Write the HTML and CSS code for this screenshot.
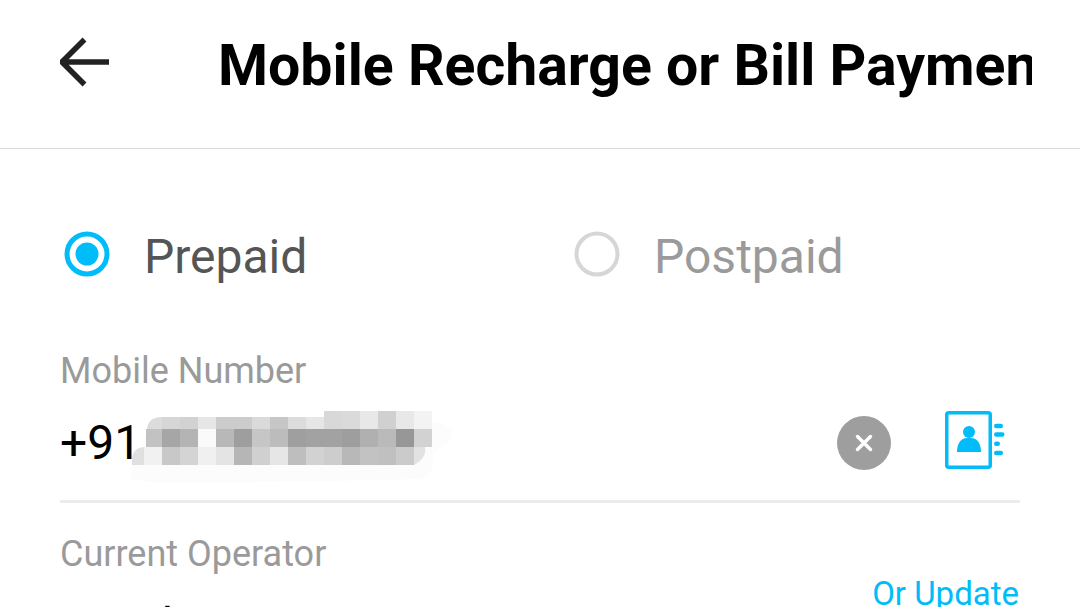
FILE: index.html
```html
<!DOCTYPE html>
<html lang="en">
<head>
<meta charset="utf-8">
<title>Mobile Recharge or Bill Payment</title>
<link rel="stylesheet" href="styles.css">
</head>
<body>
<header class="topbar">
  <button class="back" aria-label="Back">
    <svg class="back-icon" viewBox="0 0 60 60" width="60" height="60"><path d="M60 23H13M35.500 0.500L13 23L35.500 45.500" transform="translate(-11 8)" fill="none" stroke="#222" stroke-width="5.500"/></svg>
  </button>
  <h1 class="title">Mobile Recharge or Bill Payment</h1>
</header>
<main class="form">
  <div class="plan">
    <label class="option">
      <svg class="radio" viewBox="0 0 46 46" width="46" height="46"><circle cx="23" cy="23" r="20" fill="none" stroke="#00bcf8" stroke-width="5"/><circle cx="23" cy="23" r="11.500" fill="#00bcf8"/></svg>
      <span class="option-text on">Prepaid</span>
    </label>
    <label class="option">
      <svg class="radio" viewBox="0 0 46 46" width="46" height="46"><circle cx="23" cy="23" r="20.500" fill="none" stroke="#d6d6d6" stroke-width="4"/></svg>
      <span class="option-text">Postpaid</span>
    </label>
  </div>
  <div class="field">
    <div class="label label-number">Mobile Number</div>
    <div class="number-row">
      <span class="number">+91</span>
      <svg class="mosaic" viewBox="0 0 330 80" width="330" height="80" aria-hidden="true">
        <path d="M3 74Q1 56 14 55L16 37Q16 24 32 24H195V18H312L325 24L322 36L305 48Q308 70 290 74L200 76L30 78Z" fill="#fcfcfc"/>
        <g transform="translate(-128 -405)">
          <path d="M147 429Q148 417 162 417V429Z" fill="#dcdcdc"/>
          <rect x="162" y="417" width="18" height="12" fill="#d6d6d6"/><rect x="180" y="417" width="18" height="12" fill="#d2d2d2"/><rect x="198" y="417" width="18" height="12" fill="#e6e6e6"/><rect x="216" y="417" width="18" height="12" fill="#cccccc"/><rect x="234" y="417" width="18" height="12" fill="#cccccc"/><rect x="252" y="417" width="18" height="12" fill="#dadada"/><rect x="270" y="417" width="18" height="12" fill="#c6c6c6"/><rect x="288" y="417" width="18" height="12" fill="#dcdcdc"/><rect x="306" y="417" width="18" height="12" fill="#e6e6e6"/>
          <rect x="324" y="411" width="18" height="18" fill="#d8d8d8"/><rect x="342" y="411" width="18" height="18" fill="#dadada"/><rect x="360" y="411" width="18" height="18" fill="#e8e8e8"/><rect x="378" y="411" width="18" height="18" fill="#d0d0d0"/><rect x="396" y="411" width="18" height="18" fill="#e8e8e8"/><rect x="414" y="411" width="18" height="18" fill="#f3f3f3"/>
          <rect x="146" y="429" width="16" height="18" fill="#c2c2c2"/><rect x="162" y="429" width="18" height="18" fill="#a6a6a6"/><rect x="180" y="429" width="18" height="18" fill="#b4b4b4"/><rect x="198" y="429" width="18" height="18" fill="#fafafa"/><rect x="216" y="429" width="18" height="18" fill="#b8b8b8"/><rect x="234" y="429" width="18" height="18" fill="#9e9e9e"/><rect x="252" y="429" width="18" height="18" fill="#c6c6c6"/><rect x="270" y="429" width="18" height="18" fill="#bcbcbc"/><rect x="288" y="429" width="18" height="18" fill="#9f9f9f"/><rect x="306" y="429" width="18" height="18" fill="#a2a2a2"/><rect x="324" y="429" width="18" height="18" fill="#a2a2a2"/><rect x="342" y="429" width="18" height="18" fill="#9e9e9e"/><rect x="360" y="429" width="18" height="18" fill="#b0b0b0"/><rect x="378" y="429" width="18" height="18" fill="#bababa"/><rect x="396" y="429" width="18" height="18" fill="#979797"/><rect x="414" y="429" width="18" height="18" fill="#d2d2d2"/>
          <path d="M132 465Q130 448 144 447V465Z" fill="#e0e0e0"/>
          <rect x="144" y="447" width="18" height="18" fill="#f1f1f1"/><rect x="162" y="447" width="18" height="18" fill="#c8c8c8"/><rect x="180" y="447" width="18" height="18" fill="#d4d4d4"/><rect x="198" y="447" width="18" height="18" fill="#f0f0f0"/><rect x="216" y="447" width="18" height="18" fill="#e4e4e4"/><rect x="234" y="447" width="18" height="18" fill="#b6b6b6"/><rect x="252" y="447" width="18" height="18" fill="#d0d0d0"/><rect x="270" y="447" width="18" height="18" fill="#e6e6e6"/><rect x="288" y="447" width="18" height="18" fill="#bebebe"/><rect x="306" y="447" width="18" height="18" fill="#d2d2d2"/><rect x="324" y="447" width="18" height="18" fill="#cdcdcd"/><rect x="342" y="447" width="18" height="18" fill="#b8b8b8"/><rect x="360" y="447" width="18" height="18" fill="#c2c2c2"/><rect x="378" y="447" width="18" height="18" fill="#c0c0c0"/><rect x="396" y="447" width="18" height="18" fill="#cbcbcb"/>
          <path d="M414 447H425Q427 458 414 465Z" fill="#e2e2e2"/>
        </g>
      </svg>
      <svg class="clear" viewBox="0 0 54 54" width="54" height="54"><circle cx="27" cy="27" r="27" fill="#9e9e9e"/><path d="M20.500 20.500L33.500 33.500M33.500 20.500L20.500 33.500" stroke="#fff" stroke-width="3.500" stroke-linecap="round"/></svg>
      <svg class="contacts" viewBox="0 0 60 58" width="60" height="58"><rect x="1.750" y="1.750" width="43.500" height="54.500" rx="2" fill="none" stroke="#00bcf8" stroke-width="3.500"/><circle cx="24" cy="21" r="6" fill="#00bcf8"/><path d="M12 41C12 31 17 27 22 27H26C31 27 36 31 36 41Z" fill="#00bcf8"/><rect x="49" y="12.800" width="9" height="4.500" rx="2.200" fill="#00bcf8"/><rect x="49" y="21.300" width="10.500" height="4.500" rx="2.200" fill="#00bcf8"/><rect x="49" y="30.500" width="6" height="4.500" rx="2.200" fill="#00bcf8"/><rect x="49" y="39.800" width="9" height="4.500" rx="2.200" fill="#00bcf8"/></svg>
    </div>
  </div>
  <div class="operator">
    <div class="operator-main">
      <div class="label">Current Operator</div>
      <div class="operator-name">Airtel</div>
    </div>
    <a class="update">Or Update</a>
  </div>
</main>
</body>
</html>
```
FILE: styles.css
```css
html, body {
  margin: 0;
  height: 607px;
  overflow: hidden;
  background: #fff;
  font-family: Roboto, "Noto Sans", sans-serif;
}
.topbar {
  display: flex;
  align-items: center;
  height: 148px;
  padding: 0 48px 0 60px;
  border-bottom: 1px solid #dcdcdc;
  width: 972px;
}
.back {
  flex: none;
  width: 60px;
  height: 60px;
  padding: 0;
  border: 0;
  background: none;
  margin-top: -26px;
}
.back-icon { display: block; }
.title {
  margin: -16px 0 0 98px;
  font-size: 57.2px;
  font-weight: 700;
  line-height: 66px;
  color: #000;
  white-space: nowrap;
  overflow: hidden;
  min-width: 0;
}
.form {
  padding: 82px 60px 0;
}
.plan {
  display: flex;
  height: 46px;
  padding-left: 4px;
}
.option {
  flex: none;
  display: flex;
  align-items: center;
  gap: 34px;
  width: 510px;
}
.radio { flex: none; }
.option-text {
  font-size: 48px;
  line-height: 52px;
  margin-top: 6px;
  color: #9a9a9a;
}
.option-text.on { color: #555; }
.field {
  margin-top: 72px;
  border-bottom: 3px solid #ebebeb;
  height: 151px;
}
.label {
  font-size: 36px;
  line-height: 44px;
  color: #9a9a9a;
}
.label-number {
  margin-bottom: 10px;
}
.number-row {
  position: relative;
  display: flex;
  align-items: center;
  height: 80px;
}
.number {
  font-size: 48px;
  line-height: 52px;
  color: #000;
  position: relative;
  z-index: 1;
}
.mosaic {
  position: absolute;
  left: 68px;
  top: 2px;
}
.clear {
  flex: none;
  margin-left: auto;
}
.contacts {
  flex: none;
  margin: -6px 15px 0 54px;
}
.operator {
  display: flex;
  justify-content: space-between;
  align-items: flex-start;
  margin-top: 29px;
}
.operator-name {
  font-size: 48px;
  line-height: 56px;
  margin-top: 22px;
  color: #000;
}
.update {
  font-size: 33px;
  line-height: 40px;
  margin: 42px 1px 0 0;
  color: #00bcf8;
}
```
